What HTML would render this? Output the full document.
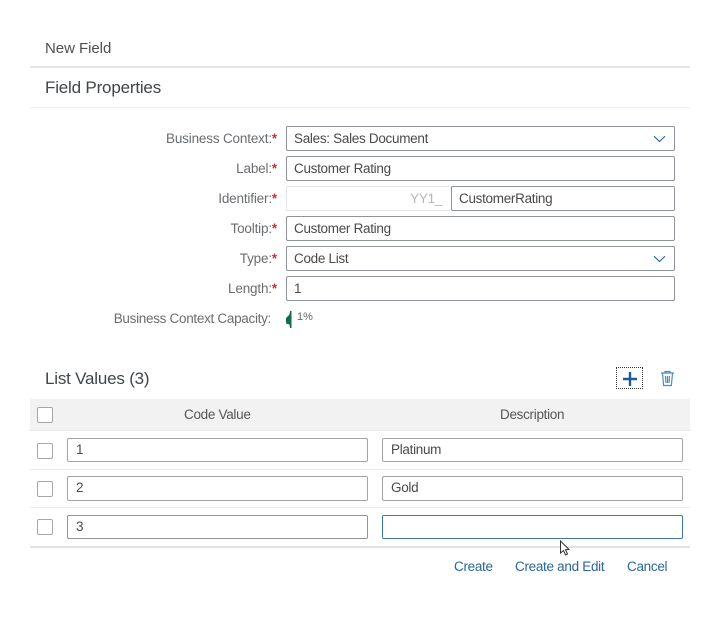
<!DOCTYPE html>
<html>
<head>
<meta charset="utf-8">
<style>
html,body{margin:0;padding:0;background:#fff}
#p{position:relative;width:720px;height:620px;overflow:hidden;background:#fff;font-family:"Liberation Sans",sans-serif;font-size:13.5px;letter-spacing:-.3px;color:#555;filter:blur(.35px)}
#p div{position:absolute;box-sizing:border-box;white-space:nowrap}
.lab{left:60px;width:217px;height:25px;line-height:25px;text-align:right;color:#6a6d70;letter-spacing:-.17px}
.lab b{color:#c33;font-weight:bold}
.inp{border:1px solid #8f9498;border-radius:2px;background:#fff;line-height:23px;padding-left:7px;color:#4a4a4a}
.m{left:286px;width:389px;height:25px}
.cb{left:37px;width:16px;height:16px;border:1px solid #a6a6a6;border-radius:2px;background:#fff}
.sep{left:30px;width:660px;height:1px;background:#ececec}
.a{left:67px;width:301px;height:24px;padding-left:8px;line-height:22px}
.d{left:382px;width:301px;height:24px;padding-left:8px;line-height:22px}
.btn{top:559px;line-height:16px;color:#2b659f}
.th{top:407px;line-height:16px;color:#555}
.h{font-size:17px;line-height:19px;color:#3f4649}
</style>
</head>
<body>
<div id="p">
<div style="left:45px;top:41px;line-height:16px;color:#4f4f4f;font-size:15px;letter-spacing:-.05px">New Field</div>
<div style="left:30px;top:66px;width:660px;height:2px;background:#e6e6e6"></div>
<div class="h" style="left:45px;top:78px;letter-spacing:-.19px">Field Properties</div>
<div style="left:30px;top:107px;width:660px;height:1px;background:#efefef"></div>

<div class="lab" style="top:126px">Business Context:<b>*</b></div>
<div class="lab" style="top:156px">Label:<b>*</b></div>
<div class="lab" style="top:186px">Identifier:<b>*</b></div>
<div class="lab" style="top:216px">Tooltip:<b>*</b></div>
<div class="lab" style="top:246px">Type:<b>*</b></div>
<div class="lab" style="top:276px">Length:<b>*</b></div>
<div class="lab" style="top:306px;left:60px;width:211px;letter-spacing:-.3px">Business Context Capacity:</div>

<div class="inp m" style="top:126px">Sales: Sales Document</div>
<svg style="position:absolute;left:653px;top:135px" width="13" height="8" viewBox="0 0 13 8"><path d="M1 1.2 L6.5 6.5 L12 1.2" fill="none" stroke="#2b659f" stroke-width="1.1"/></svg>
<div class="inp m" style="top:156px">Customer Rating</div>
<div class="inp" style="left:286px;top:186px;width:166px;height:25px;border-color:#e4e4e4;text-align:right;padding-right:9px;color:#b8b8b8">YY1_</div>
<div class="inp" style="left:451px;top:186px;width:224px;height:25px">CustomerRating</div>
<div class="inp m" style="top:216px">Customer Rating</div>
<div class="inp m" style="top:246px">Code List</div>
<svg style="position:absolute;left:653px;top:255px" width="13" height="8" viewBox="0 0 13 8"><path d="M1 1.2 L6.5 6.5 L12 1.2" fill="none" stroke="#2b659f" stroke-width="1.1"/></svg>
<div class="inp m" style="top:276px">1</div>

<svg style="position:absolute;left:285px;top:311px" width="8" height="17" viewBox="0 0 8 17"><path d="M5 0 L6.5 0 L6.5 17 L5 17 L4.5 13.5 L1 12.5 L1 7 L4.5 3.5 Z" fill="#0f6b4a"/></svg>
<div style="left:297px;top:311px;font-size:11px;line-height:13px;color:#666;letter-spacing:0">1%</div>

<div class="h" style="left:45px;top:369px;letter-spacing:-.2px">List Values (3)</div>
<div style="left:616px;top:367px;width:27px;height:22px;border:1px dotted #333"></div>
<svg style="position:absolute;left:622px;top:371px" width="16" height="16" viewBox="0 0 16 16"><path d="M1 8 H15 M8 1 V15" stroke="#1f5a96" stroke-width="2.4"/></svg>
<svg style="position:absolute;left:660px;top:370px" width="15" height="17" viewBox="0 0 15 17"><path d="M1 3 H14 M5 3 V1.5 H10 V3 M2.5 3 L3.6 15.5 H11.4 L12.5 3 M5.5 6 L6 13 M7.5 6 V13 M9.5 6 L9 13" fill="none" stroke="#4d8bc0" stroke-width="1.2"/></svg>

<div style="left:30px;top:399px;width:660px;height:32px;background:#f2f2f2;border-bottom:1px solid #e8e8e8"></div>
<div class="cb" style="top:407px"></div>
<div class="th" style="left:184px">Code Value</div>
<div class="th" style="left:500px">Description</div>

<div class="cb" style="top:443px"></div>
<div class="inp a" style="top:438px;border-color:#a4a4a4">1</div>
<div class="inp d" style="top:438px;border-color:#a4a4a4">Platinum</div>
<div class="sep" style="top:469px"></div>

<div class="cb" style="top:481px"></div>
<div class="inp a" style="top:476px;height:25px;border-color:#a4a4a4">2</div>
<div class="inp d" style="top:476px;height:25px;border-color:#a4a4a4">Gold</div>
<div class="sep" style="top:507px"></div>

<div class="cb" style="top:519px"></div>
<div class="inp a" style="top:515px;border-color:#949494">3</div>
<div class="inp d" style="top:515px;border-color:#3d79ad"></div>
<div style="left:30px;top:546px;width:660px;height:2px;background:#e2e2e2"></div>

<div class="btn" style="left:454px">Create</div>
<div class="btn" style="left:515px">Create and Edit</div>
<div class="btn" style="left:627px">Cancel</div>

<svg style="position:absolute;left:559px;top:540px" width="12" height="17" viewBox="0 0 12 17"><path d="M1.5 1 V13 L4.5 10.5 L6.5 15 L8.5 14 L6.5 9.7 L10 9.5 Z" fill="#fff" stroke="#333" stroke-width="1"/></svg>
</div>
</body>
</html>
